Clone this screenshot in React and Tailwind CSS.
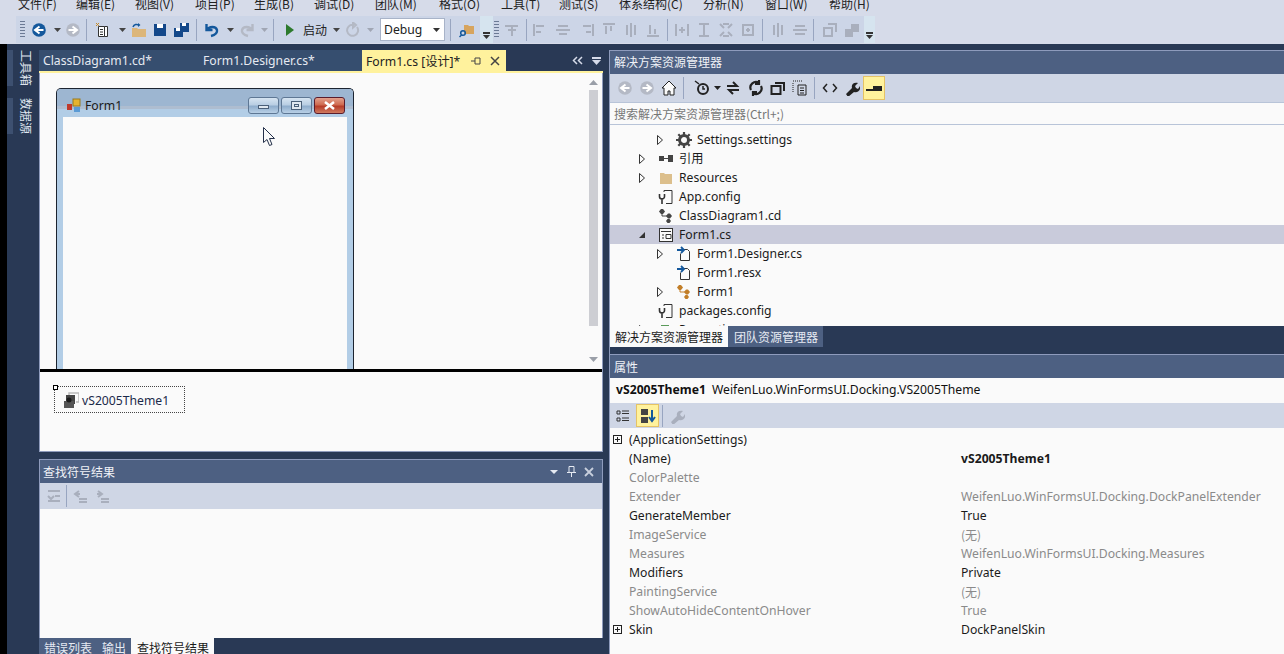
import React from "react";

const F = { fontFamily: '"Noto Sans","Noto Sans CJK SC",sans-serif', fontSize: "12.2px" };
const CJK = { fontFamily: '"Noto Sans CJK SC","Noto Sans",sans-serif' };

const Ic = ({ w = 16, children, vb }) => (
  <svg width={w} height={16} viewBox={vb || `0 0 ${w} 16`} className="block shrink-0">{children}</svg>
);
const Cell = ({ w = 22, children }) => <div className="flex items-center justify-center shrink-0 h-full" style={{ width: w }}>{children}</div>;
const Caret = ({ c = "#444", w = 12 }) => <Cell w={w}><svg width="7" height="4" className="shrink-0"><path d="M0 0h7L3.5 4z" fill={c} /></svg></Cell>;
const Sep = () => <div className="w-px h-[22px] bg-[#98a5c0] shrink-0 mx-[3px]" />;
const Gripper = () => <div className="w-[5px] h-[19px] shrink-0 ml-1 bg-[radial-gradient(#6c7a95_0.7px,transparent_0.8px)] bg-[length:2px_3px]" />;

const CircleArrow = ({ c, dir = 1 }) => (
  <Ic><circle cx="8" cy="8" r="6.8" fill={c} /><path d={dir > 0 ? "M3.5 8h9M7.5 4.5L12 8l-4.5 3.5" : "M3.5 8h9M8.5 4.5L4 8l4.5 3.5"} stroke="#fff" strokeWidth="2" fill="none" /></Ic>
);
const Floppy = ({ x = 2, s = 12 }) => (
  <g><rect x={x} y={2} width={s} height={12} fill="#14488a" /><rect x={x + 3} y={2} width={s - 6} height={4} fill="#fff" /><rect x={x + 3} y={10} width={s - 6} height={4} fill="#14488a" /></g>
);
const Undo = ({ c }) => <Ic><path d="M2.5 2v6h6M3 8c2-4 9-4 10 0 .5 3-2 5-6 6" fill="none" stroke={c} strokeWidth="2.4" /></Ic>;
const Redo = ({ c }) => <Ic><path d="M13.5 2v6h-6M13 8C11 4 4 4 3 8c-.5 3 2 5 6 6" fill="none" stroke={c} strokeWidth="2.4" /></Ic>;
const G = "#a9afbd";
const GS = ({ d }) => <Ic><path d={d} fill="none" stroke={G} strokeWidth="2" /></Ic>;
const Wrench = ({ c }) => <Ic><path d="M2 14l6-6c-1-4 2-6 6-5l-3 3 1 2 2 1 2-3c1 4-2 7-6 6l-6 5z" fill={c} /></Ic>;

const menus = [["文件(F)", 58], ["编辑(E)", 59], ["视图(V)", 60], ["项目(P)", 59], ["生成(B)", 60], ["调试(D)", 61], ["团队(M)", 64], ["格式(O)", 62], ["工具(T)", 58], ["测试(S)", 60], ["体系结构(C)", 84], ["分析(N)", 62], ["窗口(W)", 64], ["帮助(H)", 60]];

const Overflow = ({ w }) => (
  <div className="bg-[#d6e4ef] h-full flex flex-col justify-end items-center pb-[4px] shrink-0" style={{ width: w }}>
    <div className="w-[7px] h-[2px] bg-[#333] mb-[1px]" />
    <svg width="7" height="4"><path d="M0 0h7L3.500 4z" fill="#333" /></svg>
  </div>
);

function TopBars() {
  return (
    <div className="bg-[#d6dbe9] h-11 shrink-0 overflow-hidden">
      <div className="h-4 flex pl-[18px] overflow-hidden text-[12px] leading-[12px] text-[#222] -mt-[2px]" style={CJK}>
        {menus.map(([t, w]) => <div key={t} className="shrink-0" style={{ width: w }}>{t}</div>)}
      </div>
      <div className="flex h-[27px] mt-[2px] pl-4">
        <div className="flex items-center bg-[#ccd5e7] h-full w-[464px] shrink-0">
          <Gripper />
          <div className="w-[2px] shrink-0" />
          <Cell w={24}><CircleArrow c="#14589c" dir={-1} /></Cell>
          <Caret />
          <Cell w={20}><CircleArrow c="#b4b9c5" /></Cell>
          <Sep />
          <Cell w={26}><Ic><path d="M3.500 4.500h6v10h-6zM9.500 4.500h3v10h-3M5 7.500h3M5 10h3M5 12.500h3" fill="#fff" stroke="#333" /><path d="M1 1h1v1H1zM3 1h1v1H3zM2 2h1v1H2zM1 3h1v1H1zM3 3h1v1H3z" fill="#c58a2a" /></Ic></Cell>
          <Caret />
          <Cell w={21}><Ic><path d="M1 6h5l1 1h8v8H1z" fill="#dcb67a" /><path d="M2 5c1-3 4-3 6-2" stroke="#14589c" strokeWidth="1.500" fill="none" /><path d="M7 1l2.500 2L7 5z" fill="#14589c" /></Ic></Cell>
          <Cell w={22}><Ic><Floppy x={2} /></Ic></Cell>
          <Cell w={22}><Ic><rect x="0" y="6" width="9" height="9" fill="#14488a" /><rect x="6" y="1" width="9" height="9" fill="#14488a" /><rect x="8" y="1" width="4" height="3" fill="#fff" /><rect x="2" y="6" width="4" height="3" fill="#fff" /></Ic></Cell>
          <Sep />
          <Cell w={24}><Undo c="#14589c" /></Cell>
          <Caret />
          <Cell w={22}><Redo c="#b4b9c5" /></Cell>
          <Caret c="#a0a6b4" />
          <Sep />
          <Cell w={26}><svg width="10" height="14"><path d="M1 1l8 6-8 6z" fill="#2d7a2d" /></svg></Cell>
          <div className="text-[12px] w-[27px] shrink-0 text-[#222] whitespace-nowrap" style={CJK}>启动</div>
          <Caret />
          <Cell w={22}><Ic><path d="M12 5a5.500 5.500 0 1 1-4-2.200M8 .5v5l3-2.500z" fill="none" stroke="#b4b9c5" strokeWidth="2" /></Ic></Cell>
          <Caret c="#a0a6b4" />
          <div className="w-[65px] h-[23px] bg-white border border-[#a8b3c8] flex items-center pl-[3px] ml-[4px] shrink-0 text-[#222]" style={F}>
            <span className="flex-1 pt-px">Debug</span>
            <svg width="7" height="4" className="mr-1"><path d="M0 0h7L3.500 4z" fill="#333" /></svg>
          </div>
          <div className="ml-[2px]"><Sep /></div>
          <Cell w={26}><Ic><path d="M5 3h4l1 1h5v8H5z" fill="#d7a45e" /><circle cx="4" cy="11" r="2.300" fill="none" stroke="#14589c" strokeWidth="1.500" /><path d="M2.500 13L0.500 15" stroke="#14589c" strokeWidth="1.500" /></Ic></Cell>
        </div>
        <Overflow w={13} />
        <div className="flex items-center bg-[#ccd5e7] h-full w-[371px] shrink-0">
          <div className="-ml-[3px]"><Gripper /></div>
          <Cell w={24}><GS d="M2 4h13M9 4v10M5 8h8" /></Cell>
          <Sep />
          {[["M2 2v12M4 4h8M4 10h5", 20], ["M1 8h14M3 4h10M4 12h8", 26], ["M14 2v12M4 4h8M7 10h5", 21], ["M2 2h12M5 4v8M10 4v5", 23], ["M8 1v14M4 3v10M12 3v10", 22], ["M2 14h12M5 3v9M10 7v5", 22]].map(([d, w], i) => <Cell key={i} w={w}><GS d={d} /></Cell>)}
          <Sep />
          {["M2 2v12M14 2v12M5 8h6M8 5v6", "M3 2h10M3 14h10M8 3v10", "M2 2l4 4M14 2l-4 4M2 14l4-4M14 14l-4-4M5 2h6M5 14h6", "M3 3h10v10H3zM8 6v4M6 8h4"].map((d, i) => <Cell key={i} w={22}><GS d={d} /></Cell>)}
          <Sep />
          <Cell w={24}><GS d="M8 1v14M4 3v10M12 3v10" /></Cell>
          <Cell w={20}><GS d="M1 8h14M3 4h10M3 12h10" /></Cell>
          <Sep />
          <Cell w={26}><GS d="M2 6h8v8H2zM6 2h8v8" /></Cell>
          <Cell w={18}><Ic><rect x="1" y="7" width="8" height="8" fill={G} /><rect x="7" y="2" width="8" height="8" fill={G} /></Ic></Cell>
        </div>
        <Overflow w={11} />
      </div>
    </div>
  );
}

const SideTab = ({ t }) => (
  <div className="h-[36px] border-l-[6px] border-[#3d5070] flex items-center justify-center text-[#dfe4ee] text-[12px] shrink-0 [writing-mode:vertical-rl] [text-orientation:sideways] leading-none" style={CJK}>{t}</div>
);

function Form() {
  const Btn = ({ red, children }) => (
    <div className={`h-[17px] w-[31px] rounded-[3px] border flex items-center justify-center shrink-0 ${red ? "border-[#5a1c2c] bg-[linear-gradient(#e3a08c_0%,#cf6a50_45%,#b63c28_55%,#cf7a60_100%)]" : "border-[#5e7794] bg-[linear-gradient(#d6e4f1_0%,#b9cee3_45%,#8fadcc_55%,#b9d0e6_100%)]"}`}>{children}</div>
  );
  return (
    <div className="w-[298px] h-[281px] ml-4 mt-[15px] rounded-t-[5px] border border-b-0 border-[#1c2430] bg-[#b2cde6] flex flex-col px-[6px] shrink-0 overflow-hidden">
      <div className="h-[28px] flex items-center shrink-0 -mx-[6px] pl-[9px] pr-[8px] pt-[5px] bg-[linear-gradient(#9db6d1_0%,#9db6d1_62%,#aebdd0_62%,#aebdd0_72%,#b2cde6_72%,#b2cde6_100%)]">
        <Ic><rect x="7" y="1" width="7" height="7" fill="#e6b32e" stroke="#9a7a1e" /><rect x="1" y="6" width="5" height="6" fill="#c0392b" /><rect x="8" y="9" width="6" height="5" fill="#5b9bd5" /></Ic>
        <span className="ml-[3px] text-[#1a1a1a] flex-1 pt-[2px]" style={F}>Form1</span>
        <div className="flex gap-[2px]">
          <Btn><div className="w-[11px] h-[4px] mt-[3px] bg-[#dfe7ef] border border-[#4a5f78]" /></Btn>
          <Btn><div className="w-[11px] h-[9px] bg-[#dfe7ef] border border-[#4a5f78] flex items-center justify-center"><div className="w-[5px] h-[3px] border border-[#4a5f78]" /></div></Btn>
          <Btn red><svg width="13" height="9"><path d="M2 1l9 7M11 1l-9 7" stroke="#fff" strokeWidth="2.500" /></svg></Btn>
        </div>
      </div>
      <div className="flex-1 bg-[#fafafa] relative">
        <svg width="14" height="21" className="absolute left-[200px] top-[10px]"><path d="M0.500 0.500v15l3.500-3 2.500 6 2.500-1-2.500-6h5z" fill="#fafafa" stroke="#24304a" /></svg>
      </div>
    </div>
  );
}

function Left() {
  return (
    <div className="w-[564px] shrink-0 flex flex-col">
      <div className="h-[21px] flex bg-[#364e6f] text-[#e6eaf2] items-center shrink-0" style={F}>
        <div className="w-[164px] pl-[4px] pt-[2px] shrink-0">ClassDiagram1.cd*</div>
        <div className="w-[159px] pt-[2px] shrink-0">Form1.Designer.cs*</div>
        <div className="w-[144px] h-full bg-[#fff29d] text-[#222] flex items-center pl-1 shrink-0">
          <span className="flex-1 whitespace-nowrap pt-[2px]">Form1.cs [<span style={CJK}>设计</span>]*</span>
          <svg width="10" height="10" className="mr-[9px]"><path d="M1 5h3M4 2v6h5M4 2h5v6M0 5h1" stroke="#444" fill="none" /></svg>
          <svg width="10" height="10" className="mr-[6px]"><path d="M1 1l8 8M9 1L1 9" stroke="#444" strokeWidth="1.500" /></svg>
        </div>
        <div className="bg-[#293955] h-full flex-1 flex items-center justify-end gap-[9px] pr-[2px]">
          <svg width="11" height="9"><path d="M5 1L1.500 4.500 5 8M10 1L6.500 4.500 10 8" stroke="#d6dbe9" strokeWidth="1.500" fill="none" /></svg>
          <div className="flex flex-col items-center"><div className="w-[9px] h-[2px] bg-[#d6dbe9] mb-[1px]" /><svg width="9" height="5"><path d="M0 0h9L4.500 5z" fill="#d6dbe9" /></svg></div>
        </div>
      </div>
      <div className="h-[2px] bg-[#fff29d] shrink-0" />
      <div className="flex-1 min-h-0 flex flex-col bg-[#fafafa] border-x border-[#8e9bbc]">
        <div className="flex h-[296px] shrink-0 overflow-hidden">
          <div className="flex-1"><Form /></div>
          <div className="w-[9px] shrink-0 mr-[4px] flex flex-col items-center">
            <svg width="9" height="5" className="mt-[7px] shrink-0"><path d="M4.500 0L9 5H0z" fill="#9a9fa8" /></svg>
            <div className="w-[9px] h-[236px] bg-[#cdced3] mt-[5px] shrink-0" />
            <svg width="9" height="5" className="mt-[31px] shrink-0"><path d="M0 0h9L4.500 5z" fill="#9a9fa8" /></svg>
          </div>
        </div>
        <div className="h-[3px] bg-black shrink-0" />
        <div className="flex-1 min-h-0 border-b border-[#8e9bbc] pt-[14px] pl-[14px]">
          <div className="relative w-[131px] h-[27px] border border-dotted border-[#444] flex items-center pl-[8px] gap-[3px]">
            <div className="absolute -left-[2px] -top-[2px] w-[5px] h-[5px] border border-black bg-white" />
            <Ic><path d="M6 3V1h10v9h-3" fill="none" stroke="#bbb" strokeWidth="1.500" /><rect x="3" y="3" width="9" height="9" fill="#444" /><rect x="1" y="9" width="10" height="7" fill="#555" /><circle cx="6" cy="8" r="2.500" fill="#1c1c1c" /></Ic>
            <span className="text-[#1b2a4a] pt-[3px]" style={F}>vS2005Theme1</span>
          </div>
        </div>
      </div>
      <div className="h-[7px] bg-[#293955] shrink-0" />
      <div className="h-[179px] shrink-0 border-x border-[#8e9bbc] flex flex-col bg-[#fafafa]">
        <div className="h-[24px] bg-[#4d6082] border-t border-[#8e9bbc] flex items-center pl-[3px] pr-2 text-[12px] text-[#f0f2f7] shrink-0" style={CJK}>
          <span className="flex-1">查找符号结果</span>
          <svg width="8" height="4" className="mr-[9px]"><path d="M0 0h8L4 4z" fill="#e6eaf2" /></svg>
          <svg width="9" height="11" className="mr-[8px]"><path d="M2 0.500h5v6H2zM0 6.500h9M4.500 6.500v4.500" fill="none" stroke="#e6eaf2" /></svg>
          <svg width="10" height="10"><path d="M1 1l8 8M9 1l-8 8" stroke="#c8cfdd" strokeWidth="1.800" /></svg>
        </div>
        <div className="h-[26px] bg-[#cfd6e5] flex items-center pl-[5px] shrink-0">
          <Cell w={18}><GS d="M2 3h12M2 8l3 3 3-3M9 8h5M2 13h12" /></Cell>
          <Sep />
          <Cell w={22}><GS d="M6 3L2 6l4 3M2 6h5M6 11h8M6 14h8" /></Cell>
          <Cell w={22}><GS d="M3 3l4 3-4 3M2 6h5M6 11h8M6 14h8" /></Cell>
        </div>
        <div className="flex-1" />
      </div>
      <div className="h-[16px] flex bg-[#293955] text-[12px] shrink-0 overflow-hidden" style={CJK}>
        <div className="bg-[#4d6082] text-[#e6eaf2] flex w-[92px] pl-[5px] gap-[10px] whitespace-nowrap shrink-0 leading-[15px] pt-[2px]"><span>错误列表</span><span>输出</span></div>
        <div className="bg-[#fafafa] text-[#1a1a1a] w-[83px] pl-[6px] shrink-0 leading-[15px] pt-[2px] whitespace-nowrap">查找符号结果</div>
      </div>
    </div>
  );
}

const Arrow = ({ open }) => open
  ? <svg width="8" height="8"><path d="M7 1v6H1z" fill="#333" /></svg>
  : <svg width="6" height="10"><path d="M0.500 0.500l5 4.500-5 4.500z" fill="#fafafa" stroke="#333" /></svg>;

const DocBlue = () => <Ic><path d="M8 3.500h3.500l2 2v9h-9v-7" fill="none" stroke="#333" /><path d="M1 4h6M5 1l3 3-3 3" fill="none" stroke="#14589c" strokeWidth="1.800" /></Ic>;
const Conf = () => <Ic><path d="M6 3V1.500h8v13H8" fill="none" stroke="#333" /><path d="M1.500 5v2.500a2.500 2.500 0 0 0 5 0V5M4 9v6" fill="none" stroke="#333" strokeWidth="1.600" /></Ic>;
const Class = ({ c = "#444" }) => <Ic><path d="M1 3.500L3 1h2l2 2.500L5 6H3z" fill={c} /><path d="M8 8l2-2.500h2L14 8l-2 2.500h-2z" fill={c} /><path d="M8 13l1.500-2h2L13 13l-1.500 2h-2z" fill={c} /><path d="M4 6v2h5" stroke={c} fill="none" /></Ic>;

const rows = [
  [2, "c", <Ic><circle cx="8" cy="8" r="4.500" fill="none" stroke="#444" strokeWidth="3" /><path d="M8 0v3M8 13v3M0 8h3M13 8h3M2.300 2.300l2 2M11.700 11.700l2 2M13.700 2.300l-2 2M2.300 13.700l2-2" stroke="#444" strokeWidth="2.200" /></Ic>, "Settings.settings"],
  [1, "c", <Ic><rect x="1" y="5" width="5" height="5" fill="#444" /><rect x="10" y="4" width="5" height="7" fill="#444" /><path d="M6 7.500h4" stroke="#444" /></Ic>, "引用"],
  [1, "c", <Ic><path d="M2 3h4l1 1h7v10H2z" fill="#dcbf8c" /></Ic>, "Resources"],
  [1, "", <Conf />, "App.config"],
  [1, "", <Class />, "ClassDiagram1.cd"],
  [1, "o", <Ic><rect x="1.500" y="1.500" width="13" height="13" fill="#fafafa" stroke="#333" /><path d="M3 4.500h10M4 8h2M8 7.500h5v4H8zM4 11h2" stroke="#333" fill="none" /></Ic>, "Form1.cs", true],
  [2, "c", <DocBlue />, "Form1.Designer.cs"],
  [2, "", <DocBlue />, "Form1.resx"],
  [2, "c", <Class c="#c27e28" />, "Form1"],
  [1, "", <Conf />, "packages.config"],
  [1, "c", <Ic><rect x="3" y="3" width="8" height="8" fill="#5a9a5a" /></Ic>, "Properties"],
];

const TreeRow = ({ r }) => {
  const [lvl, ar, ic, t, sel] = r;
  return (
    <div className={`h-[19px] flex items-center text-[#1a1a1a] shrink-0 ${sel ? "bg-[#c9cbdb]" : ""}`} style={{ paddingLeft: lvl === 2 ? 45 : 27, ...F }}>
      <div className="w-[9px] flex justify-center shrink-0">{ar && <Arrow open={ar === "o"} />}</div>
      <div className="ml-[12px] mr-[5px] shrink-0 w-[16px]">{ic}</div>
      <span className="whitespace-nowrap pt-[2px]">{t}</span>
    </div>
  );
};

const props = [
  ["(ApplicationSettings)", "", 1, 1],
  ["(Name)", "vS2005Theme1", 1, 0, 1],
  ["ColorPalette", "", 0],
  ["Extender", "WeifenLuo.WinFormsUI.Docking.DockPanelExtender", 0],
  ["GenerateMember", "True", 1],
  ["ImageService", "(无)", 0],
  ["Measures", "WeifenLuo.WinFormsUI.Docking.Measures", 0],
  ["Modifiers", "Private", 1],
  ["PaintingService", "(无)", 0],
  ["ShowAutoHideContentOnHover", "True", 0],
  ["Skin", "DockPanelSkin", 1, 1],
];

function Right() {
  return (
    <div className="flex-1 min-w-0 flex flex-col border-l border-[#8e9bbc]">
      <div className="h-[24px] bg-[#4d6082] border-t border-[#8e9bbc] text-[12px] text-[#f0f2f7] flex items-center pl-[4px] pb-[2px] shrink-0" style={CJK}>解决方案资源管理器</div>
      <div className="h-[29px] bg-[#cfd6e5] border-b border-[#b8c4d8] flex items-center pl-[4px] shrink-0">
        <Cell w={22}><CircleArrow c="#b4b9c5" dir={-1} /></Cell>
        <Cell w={22}><CircleArrow c="#b4b9c5" /></Cell>
        <Cell w={22}><Ic><path d="M8 1L1 8h2v7h4v-4h2v4h4V8h2z" fill="#fafafa" stroke="#222" /></Ic></Cell>
        <Sep />
        <div className="w-[3px] shrink-0" />
        <Cell w={24}><Ic><circle cx="9" cy="9" r="5" fill="none" stroke="#222" strokeWidth="2" /><path d="M9 6v3h2M1 1l4 3" stroke="#222" fill="none" strokeWidth="1.500" /></Ic></Cell>
        <Caret c="#222" w={7} />
        <Cell w={24}><Ic><path d="M2 6h9M8 2l4 4-4 0M14 10H5M8 14l-4-4 4 0" stroke="#222" strokeWidth="2" fill="none" /></Ic></Cell>
        <Cell w={22}><Ic><path d="M3 10a5.500 5.500 0 0 1 8-7M13 6a5.500 5.500 0 0 1-8 7M11 0v4H7M5 16v-4h4" stroke="#222" strokeWidth="2.200" fill="none" /></Ic></Cell>
        <Cell w={22}><Ic><rect x="1.500" y="6" width="9" height="8" fill="none" stroke="#222" strokeWidth="2" /><path d="M5 3h9v8" stroke="#222" strokeWidth="2" fill="none" /></Ic></Cell>
        <Cell w={22}><Ic><path d="M6 5h8v10H6zM8 8h4M8 10.500h4M8 13h4" fill="none" stroke="#222" /><path d="M1 1h9M1 3v9" stroke="#222" strokeDasharray="1 1" fill="none" /></Ic></Cell>
        <Sep />
        <Cell w={24}><Ic><path d="M5 4L1.500 8 5 12M11 4l3.500 4L11 12" stroke="#222" strokeWidth="1.500" fill="none" /></Ic></Cell>
        <Cell w={20}><Wrench c="#222" /></Cell>
        <div className="w-[22px] h-[24px] ml-px bg-[#fff29d] border border-[#e5c365] flex items-center justify-center shrink-0">
          <svg width="16" height="6"><path d="M0 4h16v2H0zM7 1h9v3H7z" fill="#222" /></svg>
        </div>
      </div>
      <div className="h-[22px] bg-[#fafafa] border-b border-[#b8c4d8] pl-[4px] text-[12px] text-[#777] flex items-center shrink-0" style={CJK}>搜索解决方案资源管理器(Ctrl+;)</div>
      <div className="h-[201px] bg-[#fafafa] pt-[5px] overflow-hidden shrink-0 flex flex-col">
        {rows.map((r) => <TreeRow key={r[3]} r={r} />)}
      </div>
      <div className="h-[21px] bg-[#293955] flex text-[12px] shrink-0" style={CJK}>
        <div className="bg-[#fafafa] text-[#1a1a1a] w-[118px] pl-[5px] flex items-center shrink-0 whitespace-nowrap">解决方案资源管理器</div>
        <div className="bg-[#4d6082] text-[#e6eaf2] w-[95px] pl-[6px] flex items-center shrink-0 whitespace-nowrap">团队资源管理器</div>
      </div>
      <div className="h-[7px] bg-[#293955] shrink-0" />
      <div className="h-[24px] bg-[#4d6082] border-t border-[#8e9bbc] text-[12px] text-[#f0f2f7] flex items-center pl-[4px] shrink-0" style={CJK}>属性</div>
      <div className="h-[25px] bg-[#fafafa] flex items-center pl-[6px] text-[#111] shrink-0 whitespace-nowrap" style={F}><b className="mr-[6px]">vS2005Theme1</b>WeifenLuo.WinFormsUI.Docking.VS2005Theme</div>
      <div className="h-[25px] bg-[#cfd6e5] flex items-center pl-[2px] shrink-0">
        <Cell w={22}><Ic><path d="M2 3h3v3H2zM2 10h3v3H2zM7 3h7M7 5.500h7M7 10h7M7 12.500h7" stroke="#333" fill="none" /></Ic></Cell>
        <div className="w-[23px] h-[23px] ml-[2px] bg-[#fff29d] border border-[#e5c365] flex items-center justify-center shrink-0">
          <Ic><rect x="1" y="1" width="7" height="6" fill="#444" /><rect x="1" y="9" width="7" height="6" fill="#444" /><path d="M12 2v10M9 9l3 4 3-4" stroke="#14589c" strokeWidth="2" fill="none" /></Ic>
        </div>
        <Sep />
        <Cell w={22}><Wrench c={G} /></Cell>
      </div>
      <div className="flex-1 min-h-0 bg-[#fafafa] pt-[2px] flex flex-col overflow-hidden">
        {props.map(([n, v, on, plus, bold]) => (
          <div key={n} className={`h-[19px] flex items-center shrink-0 ${on ? "text-[#1a1a1a]" : "text-[#8a8a8a]"}`} style={F}>
            <div className="w-[19px] pl-[3px] shrink-0">{plus ? <div className="w-[9px] h-[9px] border border-[#222] flex items-center justify-center relative"><div className="w-[5px] h-px bg-[#222]" /><div className="absolute w-px h-[5px] bg-[#222]" /></div> : null}</div>
            <div className="w-[332px] shrink-0 whitespace-nowrap pt-[2px]">{n}</div>
            {v.includes("无")
              ? <div className="whitespace-nowrap" style={{ ...CJK, fontSize: "12px" }}>{v}</div>
              : <div className={`whitespace-nowrap pt-[2px] ${bold ? "font-bold" : ""}`}>{v}</div>}
          </div>
        ))}
      </div>
    </div>
  );
}

export default function App() {
  return (
    <div className="w-[1284px] h-[654px] overflow-hidden flex flex-col bg-[#293955]">
      <TopBars />
      <div className="flex-1 min-h-0 flex">
        <div className="w-[7px] bg-black shrink-0" />
        <div className="w-[32px] shrink-0 pt-[6px] flex flex-col gap-[12px]">
          <SideTab t="工具箱" />
          <SideTab t="数据源" />
        </div>
        <div className="flex-1 min-w-0 flex pt-[6px] gap-[6px]">
          <Left />
          <Right />
        </div>
      </div>
    </div>
  );
}
